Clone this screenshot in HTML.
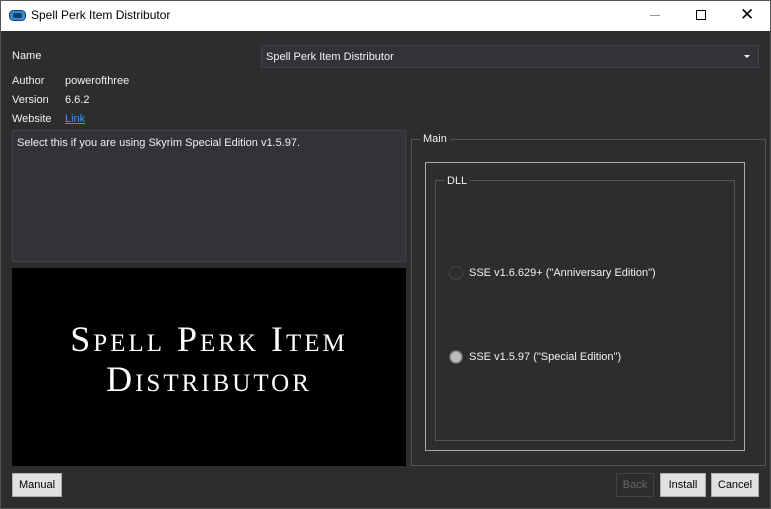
<!DOCTYPE html>
<html><head><style>
*{margin:0;padding:0;box-sizing:border-box}
body{width:771px;height:509px;overflow:hidden;background:#2d2d30;font-family:"Liberation Sans",sans-serif;font-size:11px;color:#f1f1f1;position:relative}
.a{position:absolute}
.btn{position:absolute;background:#e1e1e1;border:1px solid #adadad;color:#000;text-align:center;padding-top:5px;font-size:11px}
</style></head><body>
<div class="a" style="left:0;top:0;width:771px;height:31px;background:#fff;border:1px solid #555;border-bottom:none"></div>
<svg class="a" style="left:9px;top:10px" width="17" height="11"><rect x="0.5" y="0.5" width="16" height="10" rx="4" fill="#2f8fd8" stroke="#1a3e66"/><rect x="4" y="3" width="9" height="5" rx="2" fill="#1a3e66"/></svg>
<div class="a" style="left:31px;top:8px;color:#000;font-size:12px">Spell Perk Item Distributor</div>
<div class="a" style="left:650px;top:15px;width:10px;height:1px;background:#999"></div>
<div class="a" style="left:696px;top:10px;width:10px;height:10px;border:1px solid #000"></div>
<div class="a" style="left:740px;top:6px;color:#000;font-size:17px;line-height:17px">✕</div>
<div class="a" style="left:0;top:31px;width:771px;height:478px;border:1px solid #555;border-top:none"></div>
<div class="a" style="left:12px;top:50px">Name</div>
<div class="a" style="left:261px;top:45px;width:498px;height:23px;background:#333337;border:1px solid #434346;padding:5px 4px">Spell Perk Item Distributor</div>
<div class="a" style="left:744px;top:55px;border:3px solid transparent;border-top:3px solid #f1f1f1"></div>
<div class="a" style="left:12px;top:75px">Author</div><div class="a" style="left:65px;top:75px">powerofthree</div>
<div class="a" style="left:12px;top:94px">Version</div><div class="a" style="left:65px;top:94px">6.6.2</div>
<div class="a" style="left:12px;top:113px">Website</div><div class="a" style="left:65px;top:113px;color:#3794ff;text-decoration:underline">Link</div>
<div class="a" style="left:12px;top:130px;width:394px;height:132px;background:#333337;border:1px solid #434346;padding:6px 4px">Select this if you are using Skyrim Special Edition v1.5.97.</div>
<div class="a" style="left:12px;top:268px;width:394px;height:198px;background:#000;color:#fff;font-family:'Liberation Serif',serif;font-variant:small-caps;font-size:36px;text-align:center;line-height:40px;padding-top:51px;letter-spacing:3px">Spell Perk Item<br>Distributor</div>
<div class="a" style="left:411px;top:139px;width:355px;height:327px;border:1px solid #555"></div>
<div class="a" style="left:420px;top:133px;background:#2d2d30;padding:0 3px">Main</div>
<div class="a" style="left:425px;top:162px;width:320px;height:289px;border:1px solid #aaa"></div>
<div class="a" style="left:435px;top:180px;width:300px;height:261px;border:1px solid #555"></div>
<div class="a" style="left:444px;top:175px;background:#2d2d30;padding:0 3px">DLL</div>
<div class="a" style="left:449px;top:266px;width:14px;height:14px;border-radius:50%;border:1px solid #444"></div>
<div class="a" style="left:469px;top:267px">SSE v1.6.629+ ("Anniversary Edition")</div>
<div class="a" style="left:449px;top:350px;width:14px;height:14px;border-radius:50%;border:1px solid #555;background:#bbb;box-shadow:inset 0 0 0 1px #999"></div>
<div class="a" style="left:469px;top:351px">SSE v1.5.97 ("Special Edition")</div>
<div class="btn" style="left:12px;top:473px;width:50px;height:24px">Manual</div>
<div class="btn" style="left:616px;top:473px;width:38px;height:24px;background:#2d2d30;border-color:#444;color:#666">Back</div>
<div class="btn" style="left:660px;top:473px;width:46px;height:24px">Install</div>
<div class="btn" style="left:711px;top:473px;width:48px;height:24px">Cancel</div>
</body></html>
